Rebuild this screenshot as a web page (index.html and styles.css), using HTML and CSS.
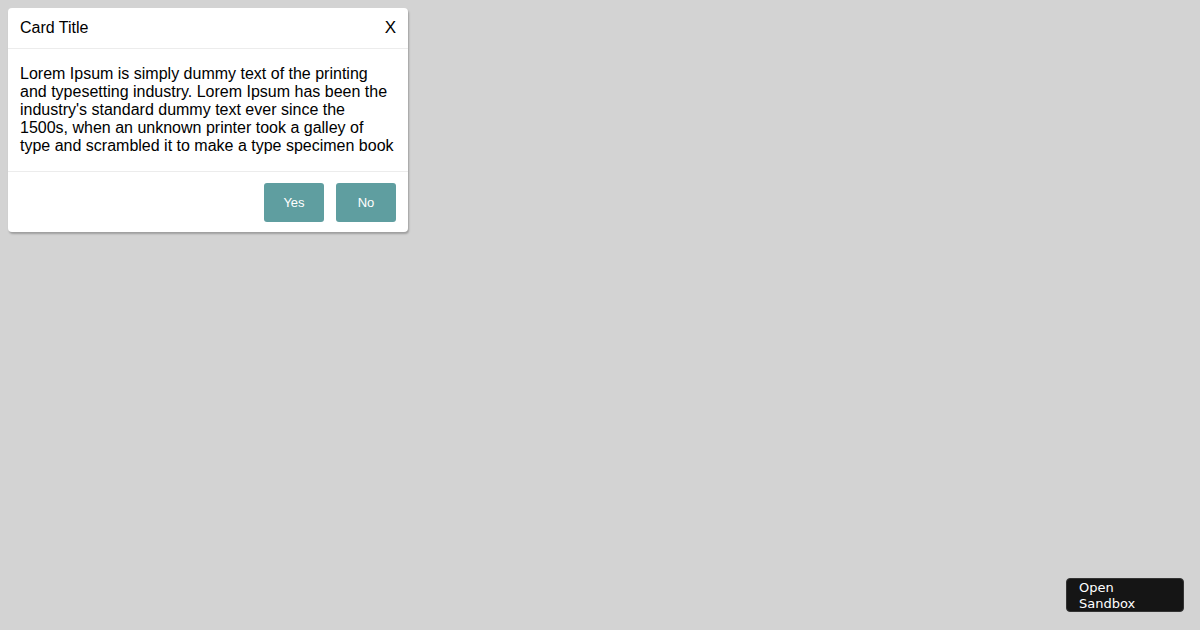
FILE: index.html
```html
<!DOCTYPE html>
<html>
<head>
<meta charset="utf-8">
<link rel="stylesheet" href="styles.css">
</head>
<body>
<div class="card">
  <div class="card-header">
    <span class="card-title">Card Title</span>
    <span class="card-close">X</span>
  </div>
  <div class="card-body">Lorem Ipsum is simply dummy text of the printing and typesetting industry. Lorem Ipsum has been the industry's standard dummy text ever since the 1500s, when an unknown printer took a galley of type and scrambled it to make a type specimen book</div>
  <div class="card-footer">
    <button class="btn">Yes</button>
    <button class="btn">No</button>
  </div>
</div>
<a class="sandbox">Open Sandbox</a>
</body>
</html>
```

FILE: styles.css
```css
html, body {
  margin: 0;
  padding: 0;
}
body {
  background: #d3d3d3;
  width: 1200px;
  height: 630px;
  padding: 8px;
  box-sizing: border-box;
  font-family: "Liberation Sans", Arial, sans-serif;
  position: relative;
}
.card {
  width: 400px;
  background: #fff;
  border-radius: 4px;
  box-shadow: 1px 2px 2px rgba(0,0,0,0.25);
  color: #000;
}
.card-header {
  display: flex;
  justify-content: space-between;
  align-items: center;
  padding: 11px 12px;
  font-size: 16px;
  line-height: 18px;
  border-bottom: 1px solid #ececec;
}
.card-close {
  font-size: 17px;
}
.card-body {
  padding: 16px 12px;
  font-size: 16px;
  line-height: 18px;
  border-bottom: 1px solid #ececec;
}
.card-footer {
  display: flex;
  justify-content: flex-end;
  gap: 12px;
  padding: 11px 12px 10px;
}
.btn {
  width: 60px;
  height: 39px;
  border: none;
  border-radius: 3px;
  background: #5f9ea0;
  color: #fff;
  font-family: "Liberation Sans", Arial, sans-serif;
  font-size: 13px;
  padding: 0;
}
.sandbox {
  position: absolute;
  right: 16px;
  bottom: 18px;
  width: 118px;
  height: 34px;
  box-sizing: border-box;
  padding: 1px 45px 0 12px;
  background: #151515;
  border: 1px solid #333;
  border-radius: 4px;
  color: #fff;
  font-family: "DejaVu Sans", sans-serif;
  font-size: 13px;
  line-height: 16px;
}
```
